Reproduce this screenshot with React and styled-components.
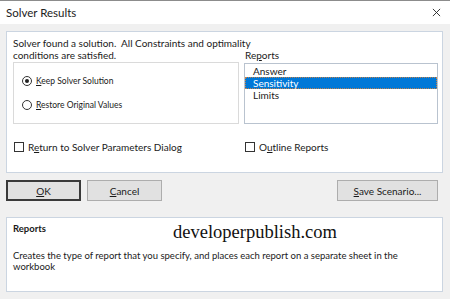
import React from "react";
import styled, { createGlobalStyle } from "styled-components";

const Global = createGlobalStyle`
  html, body { margin: 0; padding: 0; }
  body {
    width: 450px; height: 299px; overflow: hidden;
    background: #f0f0f0;
    font-family: Lato, "Open Sans", sans-serif;
    color: #1a1a1a;
  }
`;

const Window = styled.div`
  width: 450px; height: 299px; box-sizing: border-box;
  border-top: 1px solid #8c8c8c;
  background: #f0f0f0;
  display: flex; flex-direction: column;
`;

const TitleBar = styled.div`
  height: 23px; background: #fff;
  display: flex; align-items: center; justify-content: space-between;
  padding: 0 6px; font-size: 11.5px; color: #222;
`;

const CloseBtn = styled.svg`
  width: 9px; height: 9px; margin-right: 3px;
`;

const Body = styled.div`
  padding: 7px 7px 0 6px;
  display: flex; flex-direction: column;
`;

const Panel = styled.div`
  background: #fff;
  border: 1px solid #cbd5e1;
  height: ${p => p.$h}px;
  margin-top: ${p => p.$mt || 0}px;
  box-sizing: border-box;
  position: relative;
  padding: 5px 0 0 6px;
`;

const TopGrid = styled.div`
  display: grid;
  grid-template-columns: 226px 194px;
  column-gap: 5px;
  row-gap: 1px;
`;

const Message = styled.div`
  font-size: 10px; line-height: 12px; white-space: nowrap;
`;

const Label = styled.div`
  align-self: end; font-size: 10px; line-height: 12px; padding-left: 1px;
`;

const RadioBox = styled.div`
  height: 62px; box-sizing: border-box;
  border: 1px solid #dadada;
  padding: 13px 0 0 8px;
  display: flex; flex-direction: column; gap: 14px;
`;

const RadioRow = styled.label`
  display: flex; align-items: center; gap: 4px;
  font-size: 8.5px; line-height: 10px;
`;

const RadioCircle = styled.span`
  width: 8px; height: 8px; border-radius: 50%;
  border: 1px solid #333; background: #fff;
  display: flex; align-items: center; justify-content: center;
  &::after {
    content: ""; width: 4px; height: 4px; border-radius: 50%;
    background: ${p => (p.$on ? "#222" : "transparent")};
  }
`;

const ListBox = styled.div`
  height: 61px; margin-top: 1px; box-sizing: border-box;
  border: 1px solid #b9c3cf;
  padding-top: 1px;
`;

const ListItem = styled.div`
  height: 12px; line-height: 12px; font-size: 10px;
  padding-left: 8px; box-sizing: border-box;
  background: ${p => (p.$sel ? "#0078d7" : "transparent")};
  color: ${p => (p.$sel ? "#fff" : "#1a1a1a")};
  outline: ${p => (p.$sel ? "1px dotted #c0804a" : "none")};
  outline-offset: -1px;
`;

const CheckRow = styled.div`
  grid-column: ${p => p.$col};
  margin-top: 16px;
  display: flex; align-items: center; gap: 4px;
  font-size: 10px; line-height: 12px;
  padding-left: 1px;
`;

const CheckBox = styled.span`
  width: 8px; height: 8px; border: 1px solid #333; background: #fff;
`;

const Buttons = styled.div`
  display: flex; gap: 6px; margin-top: 7px; height: 21px;
`;

const Button = styled.button`
  width: ${p => p.$w}px; height: 21px; box-sizing: border-box;
  background: #e1e1e1;
  border: 1px solid ${p => (p.$def ? "#3a3a3a" : "#adadad")};
  box-shadow: ${p => (p.$def ? "inset 0 0 0 1px #3a3a3a" : "none")};
  font-family: Lato, "Open Sans", sans-serif;
  font-size: 10px; color: #1a1a1a; padding: 0;
  margin-left: ${p => (p.$push ? "auto" : "0")};
  margin-right: ${p => (p.$push ? "5px" : "0")};
`;

const U = styled.span`text-decoration: underline;`;

const InfoTitle = styled.div`
  font-weight: 700; font-size: 9.5px; line-height: 12px;
`;

const InfoText = styled.div`
  margin-top: 15px; font-size: 9.5px; line-height: 11px;
`;

const Watermark = styled.div`
  position: absolute; left: 166px; top: 4px;
  font-family: "Liberation Serif", "Times New Roman", serif;
  font-size: 18.5px; line-height: 20px; color: #111;
`;

export default function App() {
  return (
    <>
      <Global />
      <Window>
        <TitleBar>
          <span>Solver Results</span>
          <CloseBtn viewBox="0 0 10 10">
            <path d="M1 1 L9 9 M9 1 L1 9" stroke="#222" strokeWidth="1" fill="none" />
          </CloseBtn>
        </TitleBar>
        <Body>
          <Panel $h={142}>
            <TopGrid>
              <Message>
                Solver found a solution.&nbsp; All Constraints and optimality
                <br />
                conditions are satisfied.
              </Message>
              <Label>
                Re<U>p</U>orts
              </Label>
              <RadioBox>
                <RadioRow>
                  <RadioCircle $on />
                  <span><U>K</U>eep Solver Solution</span>
                </RadioRow>
                <RadioRow>
                  <RadioCircle />
                  <span><U>R</U>estore Original Values</span>
                </RadioRow>
              </RadioBox>
              <ListBox>
                <ListItem>Answer</ListItem>
                <ListItem $sel>Sensitivity</ListItem>
                <ListItem>Limits</ListItem>
              </ListBox>
              <CheckRow $col={1}>
                <CheckBox />
                <span>R<U>e</U>turn to Solver Parameters Dialog</span>
              </CheckRow>
              <CheckRow $col={2}>
                <CheckBox />
                <span>O<U>u</U>tline Reports</span>
              </CheckRow>
            </TopGrid>
          </Panel>
          <Buttons>
            <Button $w={75} $def><U>O</U>K</Button>
            <Button $w={75}><U>C</U>ancel</Button>
            <Button $w={101} $push><U>S</U>ave Scenario...</Button>
          </Buttons>
          <Panel $h={75} $mt={16}>
            <InfoTitle>Reports</InfoTitle>
            <Watermark>developerpublish.com</Watermark>
            <InfoText>
              Creates the type of report that you specify, and places each report on a separate sheet in the
              <br />
              workbook
            </InfoText>
          </Panel>
        </Body>
      </Window>
    </>
  );
}
